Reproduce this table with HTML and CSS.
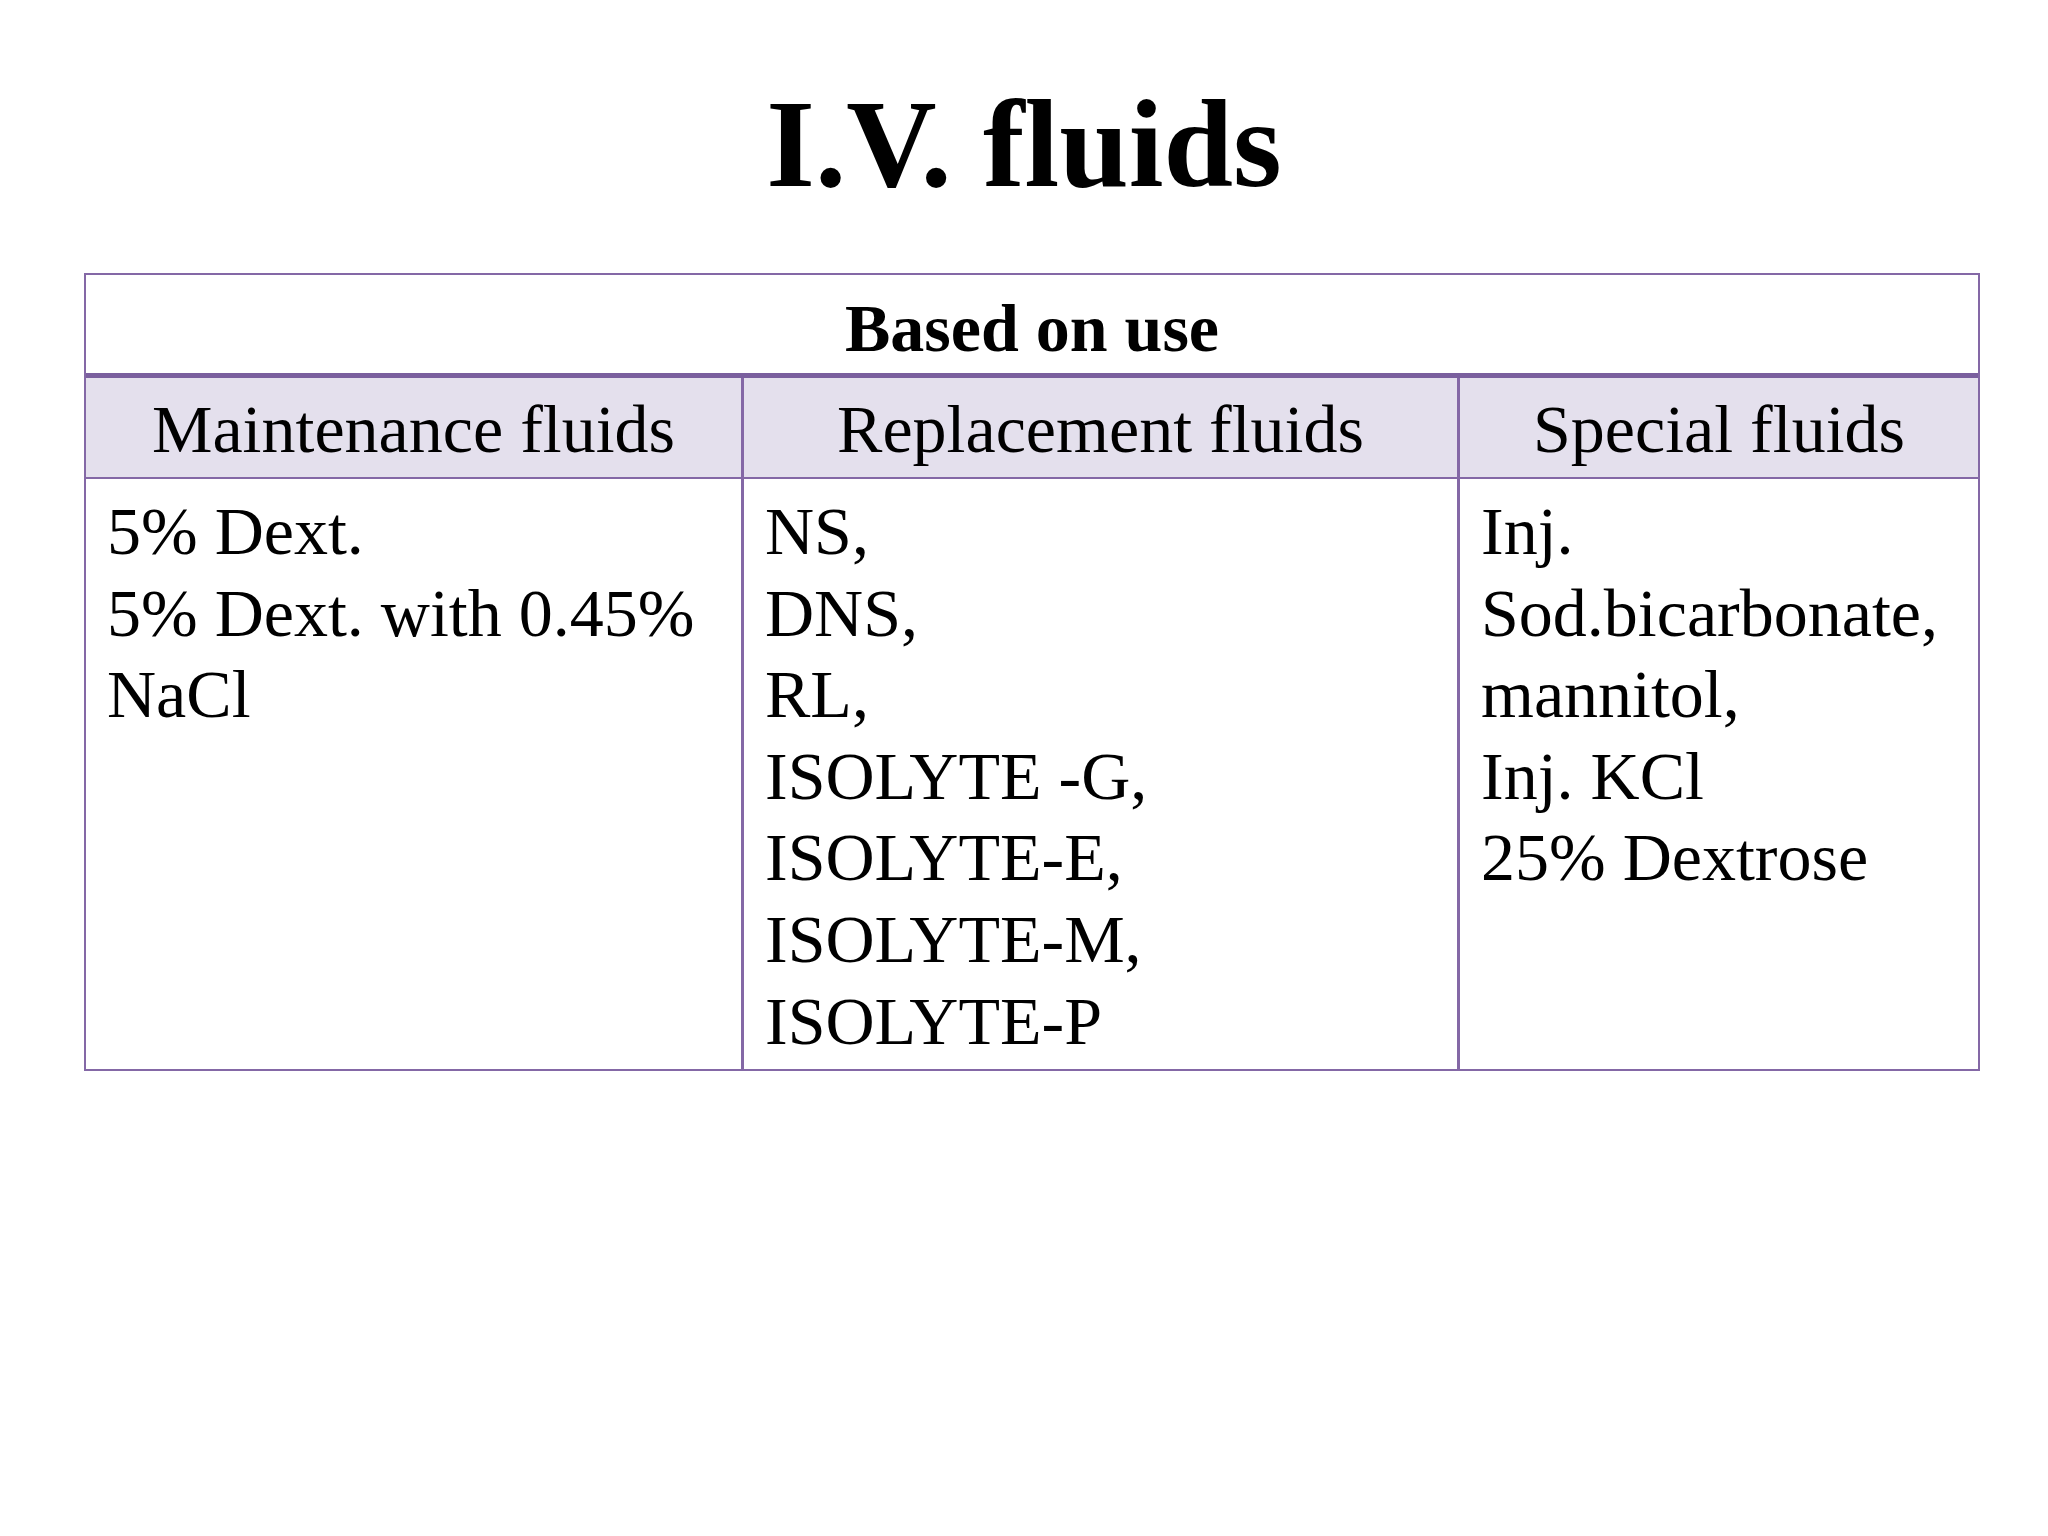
FILE: index.html
```html
<!DOCTYPE html>
<html lang="en">
<head>
<meta charset="utf-8">
<title>I.V. fluids</title>
<link rel="stylesheet" href="styles.css">
</head>
<body>
<div class="slide">
  <h1 class="title">I.V. fluids</h1>
  <div class="tbl">
    <div class="caption">Based on use</div>
    <div class="grid">
      <div class="cell head">Maintenance fluids</div>
      <div class="cell head">Replacement fluids</div>
      <div class="cell head last">Special fluids</div>
      <div class="cell body">5% Dext.<br>5% Dext. with 0.45%<br>NaCl</div>
      <div class="cell body">NS,<br>DNS,<br>RL,<br>ISOLYTE -G,<br>ISOLYTE-E,<br>ISOLYTE-M,<br>ISOLYTE-P</div>
      <div class="cell body last">Inj.<br>Sod.bicarbonate,<br>mannitol,<br>Inj. KCl<br>25% Dextrose</div>
    </div>
  </div>
</div>
</body>
</html>
```
FILE: styles.css
```css
html, body {
  margin: 0;
  padding: 0;
  background: #ffffff;
}
.slide {
  width: 2048px;
  height: 1536px;
  background: #ffffff;
  font-family: "Liberation Serif", "Times New Roman", serif;
  color: #000000;
  overflow: hidden;
}
.title {
  margin: 0;
  padding-top: 82px;
  font-size: 125px;
  line-height: 125px;
  font-weight: bold;
  text-align: center;
}
.tbl {
  margin-top: 66px;
  margin-left: 84px;
  width: 1896px;
  box-sizing: border-box;
  border: 2px solid #8468a6;
}
.caption {
  height: 103px;
  box-sizing: border-box;
  padding-top: 19px;
  font-size: 68px;
  line-height: 68px;
  font-weight: bold;
  text-align: center;
  border-bottom: 5px solid #7a5f9e;
}
.grid {
  display: grid;
  grid-template-columns: 658px 716px 518px;
  grid-template-rows: 101px 590px;
}
.cell {
  box-sizing: border-box;
  border-right: 3px solid #8468a6;
  font-size: 68px;
}
.cell.last {
  border-right: none;
}
.head {
  background: #e4e0ed;
  border-bottom: 2px solid #8468a6;
  padding-top: 17px;
  line-height: 68px;
  text-align: center;
}
.body {
  padding: 12px 20px 0 21px;
  line-height: 81.6px;
}
```
